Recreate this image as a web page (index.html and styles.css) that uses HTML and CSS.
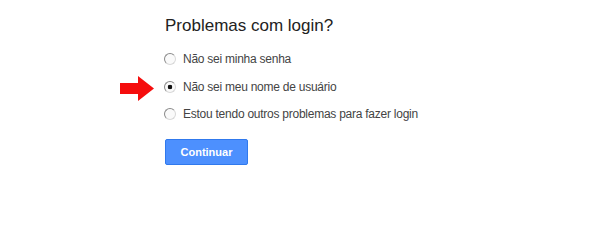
FILE: index.html
```html
<!DOCTYPE html>
<html>
  <head>
    <meta charset="utf-8">
    <title>Problemas com login?</title>
    <link rel="stylesheet" href="styles.css">
  </head>
  <body>
    <div id="recovery">
      <h2>Problemas com login?</h2>
      <form id="options">
        <label class="option">
          <input type="radio" name="problem" value="password">
          <span>Não sei minha senha</span>
        </label>
        <label class="option marked">
          <svg class="arrow" width="34" height="25" viewBox="0 0 34 25">
            <path d="M0 7 H18 V0 L34 12.5 L18 25 V18 H0 Z" fill="#f50d0d"/>
          </svg>
          <input type="radio" name="problem" value="username" checked>
          <span>Não sei meu nome de usuário</span>
        </label>
        <label class="option">
          <input type="radio" name="problem" value="other">
          <span>Estou tendo outros problemas para fazer login</span>
        </label>
        <button type="button" id="continue">Continuar</button>
      </form>
    </div>
  </body>
</html>
```

FILE: styles.css
```css
* {
    font-family: Arial, "Liberation Sans", sans-serif;
}

body {
    margin: 0;
    background: #fff;
}

#recovery {
    padding: 15px 0 0 165px;
}

h2 {
    margin: 0 0 16px 0;
    font-size: 17px;
    line-height: 21px;
    font-weight: normal;
    color: #222;
}

#options {
    display: flex;
    flex-direction: column;
    align-items: flex-start;
}

.option {
    position: relative;
    display: flex;
    align-items: center;
    height: 14px;
    margin-bottom: 13.5px;
    font-size: 12px;
    letter-spacing: -0.25px;
    color: #444;
}

.option input {
    appearance: none;
    -webkit-appearance: none;
    width: 12px;
    height: 12px;
    margin: 0 7px 0 -1px;
    border-radius: 50%;
    border: 1px solid #d8d8d8;
    border-top-color: #8a8a8a;
    border-left-color: #8a8a8a;
    background: #fafafa;
    box-sizing: border-box;
}

.option input:checked {
    background: radial-gradient(circle, #111 0, #111 2px, #fafafa 2.6px);
}

.arrow {
    position: absolute;
    left: -45px;
    top: -4px;
}

#continue {
    margin-top: 4px;
    width: 83px;
    height: 26px;
    border: 1px solid #3079ed;
    border-radius: 2px;
    background: #4d90fe;
    color: #fff;
    font-size: 11px;
    font-weight: bold;
    padding: 0;
}
```
